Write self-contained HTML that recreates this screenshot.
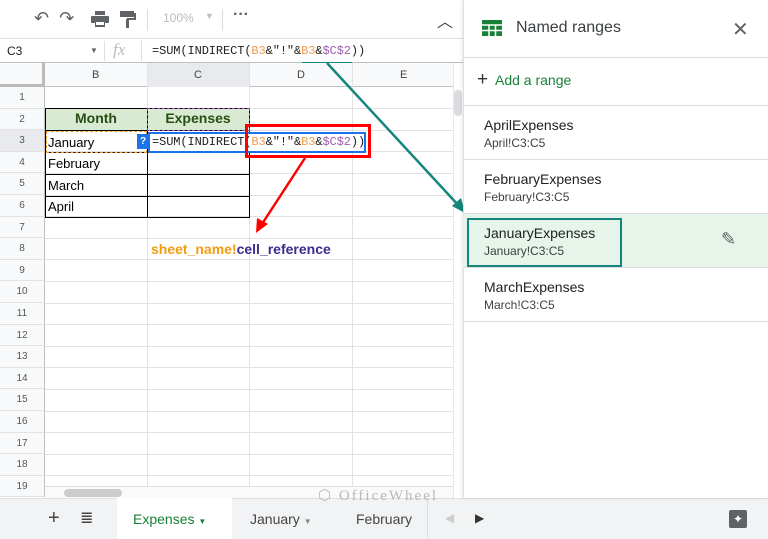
<!DOCTYPE html><html><head><style>
*{box-sizing:border-box;margin:0;padding:0}
body{width:768px;height:539px;overflow:hidden;background:#fff;font-family:"Liberation Sans",Arial,sans-serif;position:relative}
.a{position:absolute}
.rh{position:absolute;left:0;width:45px;height:21.6px;border-bottom:1px solid #e2e2e2;border-right:1px solid #c0c0c0;background:#f8f9fa;font-size:10px;color:#555;text-align:center;line-height:21px}
.hl{position:absolute;left:45px;width:408px;height:1px;background:#e2e2e2}
.vl{position:absolute;top:63px;width:1px;height:435px;background:#e2e2e2}
.cell{position:absolute;font-size:13px;color:#000;padding-left:3px;line-height:21px}
.item{position:absolute;left:463px;width:305px;height:54px;border-bottom:1px solid #dadce0}
.item b{position:absolute;left:21px;top:11px;font-weight:normal;font-size:14px;color:#202124}
.item i{position:absolute;left:21px;top:30px;font-style:normal;font-size:12px;color:#3c4043}
.mono{font-family:'Liberation Mono',monospace;font-size:12px;letter-spacing:-0.1px;color:#222}
</style></head><body>
<div class="a" style="left:0;top:0;width:463px;height:39px;border-bottom:1px solid #e0e0e0"></div>
<div class="a" style="left:34px;top:8px;font-size:18px;color:#5f6368;letter-spacing:10px">↶↷</div>
<svg class="a" style="left:91px;top:11px" width="18" height="16"><rect x="4" y="0" width="10" height="4" fill="#5f6368"/><rect x="0" y="5" width="18" height="7" rx="1" fill="#5f6368"/><rect x="4" y="10" width="10" height="6" fill="#5f6368"/><rect x="5" y="11" width="8" height="3" fill="#fff"/></svg>
<svg class="a" style="left:120px;top:11px" width="16" height="17"><rect x="0" y="0" width="14" height="6" fill="#5f6368"/><rect x="14" y="2" width="2" height="6" fill="#5f6368"/><rect x="7" y="7" width="9" height="2" fill="#5f6368"/><rect x="6" y="8" width="3" height="9" fill="#5f6368"/></svg>
<div class="a" style="left:147px;top:9px;width:1px;height:22px;background:#dadce0"></div>
<div class="a" style="left:163px;top:11px;font-size:12px;color:#bbb">100%</div>
<div class="a" style="left:205px;top:11px;font-size:9px;color:#bbb">▼</div>
<div class="a" style="left:222px;top:9px;width:1px;height:22px;background:#dadce0"></div>
<div class="a" style="left:233px;top:6px;font-size:16px;color:#5f6368;font-weight:bold">···</div>
<div class="a" style="left:437px;top:8px;font-size:16px;color:#444">︿</div>
<div class="a" style="left:0;top:39px;width:463px;height:24px;border-bottom:1px solid #c0c0c0"></div>
<div class="a" style="left:7px;top:44px;font-size:12px;color:#222">C3</div>
<div class="a" style="left:90px;top:46px;font-size:8px;color:#666">▼</div>
<div class="a" style="left:104px;top:41px;width:1px;height:20px;background:#e0e0e0"></div>
<div class="a" style="left:113px;top:40px;font-size:17px;color:#bbb;font-style:italic;font-family:'Liberation Serif',serif">fx</div>
<div class="a" style="left:141px;top:41px;width:1px;height:20px;background:#e0e0e0"></div>
<div class="a mono" style="left:152px;top:44px">=SUM(INDIRECT(<span style="color:#f29b4a">B3</span>&amp;"!"&amp;<span style="color:#f29b4a">B3</span>&amp;<span style="color:#9c5bb0">$C$2</span>))</div>
<div class="a" style="left:302px;top:62px;width:50px;height:2px;background:#15867d"></div>
<div class="a" style="left:0;top:63px;width:453px;height:24px;background:#f8f9fa;border-bottom:1px solid #c0c0c0"></div>
<div class="a" style="left:0;top:63px;width:45px;height:24px;border-right:3px solid #bbb;border-bottom:3px solid #bbb"></div>
<div class="a" style="left:147px;top:63px;width:102px;height:24px;background:#e8eaed"></div>
<div class="a" style="left:92px;top:69px;font-size:11px;color:#444">B</div>
<div class="a" style="left:194px;top:69px;font-size:11px;color:#444">C</div>
<div class="a" style="left:297px;top:69px;font-size:11px;color:#444">D</div>
<div class="a" style="left:400px;top:69px;font-size:11px;color:#444">E</div>
<div class="vl" style="left:147px"></div><div class="vl" style="left:249px"></div><div class="vl" style="left:352px"></div>
<div class="rh" style="top:87px">1</div><div class="rh" style="top:108.6px">2</div><div class="rh" style="top:130.2px;background:#e8eaed">3</div><div class="rh" style="top:151.8px">4</div><div class="rh" style="top:173.4px">5</div><div class="rh" style="top:195px">6</div><div class="rh" style="top:216.6px">7</div><div class="rh" style="top:238.2px">8</div><div class="rh" style="top:259.8px">9</div><div class="rh" style="top:281.4px">10</div><div class="rh" style="top:303px">11</div><div class="rh" style="top:324.6px">12</div><div class="rh" style="top:346.2px">13</div><div class="rh" style="top:367.8px">14</div><div class="rh" style="top:389.4px">15</div><div class="rh" style="top:411px">16</div><div class="rh" style="top:432.6px">17</div><div class="rh" style="top:454.2px">18</div><div class="rh" style="top:475.8px">19</div>
<div class="hl" style="top:108px"></div><div class="hl" style="top:130px"></div><div class="hl" style="top:151px"></div><div class="hl" style="top:173px"></div><div class="hl" style="top:195px"></div><div class="hl" style="top:216px"></div><div class="hl" style="top:238px"></div><div class="hl" style="top:259px"></div><div class="hl" style="top:281px"></div><div class="hl" style="top:303px"></div><div class="hl" style="top:324px"></div><div class="hl" style="top:346px"></div><div class="hl" style="top:367px"></div><div class="hl" style="top:389px"></div><div class="hl" style="top:411px"></div><div class="hl" style="top:432px"></div><div class="hl" style="top:454px"></div><div class="hl" style="top:475px"></div>
<div class="a" style="left:45px;top:108px;width:204px;height:22px;background:#d9ead3"></div>
<div class="a" style="left:45px;top:108px;width:205px;height:110px;border:1px solid #000"></div>
<div class="a" style="left:147px;top:108px;width:1px;height:110px;background:#000"></div>
<div class="a" style="left:45px;top:130px;width:205px;height:1px;background:#000"></div>
<div class="a" style="left:45px;top:174px;width:205px;height:1px;background:#000"></div>
<div class="a" style="left:45px;top:196px;width:205px;height:1px;background:#000"></div>
<div class="a" style="left:45px;top:152px;width:205px;height:1px;background:#000"></div>
<div class="a" style="left:147px;top:108px;width:103px;height:23px;border:1px dashed #8e44ad"></div>
<div class="a" style="left:46px;top:131px;width:101px;height:22px;border:1px dashed #f29b2a"></div>
<div class="a" style="left:45px;top:110px;width:102px;text-align:center;font-size:14px;font-weight:bold;color:#274e13">Month</div>
<div class="a" style="left:147px;top:110px;width:102px;text-align:center;font-size:14px;font-weight:bold;color:#274e13">Expenses</div>
<div class="cell" style="left:45px;top:132px">January</div>
<div class="cell" style="left:45px;top:153px">February</div>
<div class="cell" style="left:45px;top:175px">March</div>
<div class="cell" style="left:45px;top:196px">April</div>
<div class="a" style="left:137px;top:134px;width:12px;height:15px;background:#1a73e8;color:#fff;font-size:10px;font-weight:bold;text-align:center;line-height:15px">?</div>
<div class="a" style="left:148px;top:132px;width:218px;height:21px;border:2px solid #1a73e8;background:#fff"></div>
<div class="a mono" style="left:152px;top:135px">=SUM(INDIRECT(<span style="color:#f29b4a">B3</span>&amp;"!"&amp;<span style="color:#f29b4a">B3</span>&amp;<span style="color:#9c5bb0">$C$2</span>))</div>
<div class="a" style="left:245px;top:124px;width:126px;height:34px;border:3px solid #f00"></div>
<div class="a" style="left:151px;top:241px;font-size:14px;font-weight:bold"><span style="color:#f39c12">sheet_name!</span><span style="color:#3d2a8c">cell_reference</span></div>
<div class="a" style="left:453px;top:63px;width:10px;height:435px;background:#fff;border-left:1px solid #e8e8e8"></div>
<div class="a" style="left:454px;top:90px;width:8px;height:26px;background:#dadce0;border-radius:4px"></div>
<div class="a" style="left:45px;top:486px;width:408px;height:12px;background:#fafafa;border-top:1px solid #e0e0e0"></div>
<div class="a" style="left:64px;top:489px;width:58px;height:8px;background:#ccc;border-radius:4px"></div>
<svg class="a" style="left:0;top:0" width="768" height="539">
<line x1="327" y1="63" x2="460" y2="207" stroke="#15867d" stroke-width="2.5"/>
<polygon points="465,213 452,206 461,198" fill="#15867d"/>
<line x1="305" y1="158" x2="262" y2="224" stroke="#f00" stroke-width="2.5"/>
<polygon points="256,233 257,218 268,224" fill="#f00"/>
</svg>
<div class="a" style="left:0;top:498px;width:768px;height:41px;background:#f1f3f4;border-top:1px solid #e0e0e0"></div>
<div class="a" style="left:48px;top:507px;font-size:20px;color:#444">+</div>
<div class="a" style="left:80px;top:508px;font-size:16px;color:#444">≣</div>
<div class="a" style="left:117px;top:498px;width:115px;height:41px;background:#fff"></div>
<div class="a" style="left:133px;top:511px;font-size:14px;color:#188038">Expenses <span style="font-size:8px">▼</span></div>
<div class="a" style="left:250px;top:511px;font-size:14px;color:#444">January <span style="font-size:8px;color:#888">▼</span></div>
<div class="a" style="left:356px;top:511px;font-size:14px;color:#444">February</div>
<div class="a" style="left:427px;top:498px;width:1px;height:41px;background:#ddd"></div>
<div class="a" style="left:445px;top:511px;font-size:12px;color:#ccc">◀</div>
<div class="a" style="left:475px;top:511px;font-size:12px;color:#333">▶</div>
<div class="a" style="left:729px;top:510px;width:18px;height:18px;background:#5f6368;border-radius:2px;color:#fff;font-size:12px;text-align:center;line-height:18px">✦</div>
<div class="a" style="left:318px;top:486px;font-size:15px;color:#aaa;font-family:'Liberation Serif',serif;letter-spacing:2px;opacity:.8">⬡ OfficeWheel</div>
<div class="a" style="left:463px;top:0;width:305px;height:498px;background:#fff;border-left:1px solid #e0e0e0;box-shadow:-1px 0 3px rgba(0,0,0,.1)"></div>
<svg class="a" style="left:482px;top:20px" width="20" height="16"><rect x="0" y="0" width="20" height="16" fill="#188038"/><g stroke="#fff" stroke-width="1.5"><line x1="0" y1="5" x2="20" y2="5"/><line x1="0" y1="10.5" x2="20" y2="10.5"/><line x1="7" y1="5" x2="7" y2="16"/><line x1="13.5" y1="5" x2="13.5" y2="16"/></g></svg>
<div class="a" style="left:516px;top:19px;font-size:16px;color:#3c4043">Named ranges</div>
<div class="a" style="left:732px;top:17px;font-size:20px;color:#5f6368">✕</div>
<div class="a" style="left:463px;top:57px;width:305px;height:1px;background:#dadce0"></div>
<div class="a" style="left:477px;top:69px;font-size:19px;color:#333">+</div>
<div class="a" style="left:495px;top:72px;font-size:14px;color:#188038">Add a range</div>
<div class="a" style="left:463px;top:105px;width:305px;height:1px;background:#dadce0"></div>
<div class="item" style="top:106px"><b>AprilExpenses</b><i>April!C3:C5</i></div>
<div class="item" style="top:160px"><b>FebruaryExpenses</b><i>February!C3:C5</i></div>
<div class="item" style="top:214px;background:#e6f4ea"><b>JanuaryExpenses</b><i>January!C3:C5</i></div>
<div class="item" style="top:268px"><b>MarchExpenses</b><i>March!C3:C5</i></div>
<div class="a" style="left:467px;top:218px;width:155px;height:49px;border:2.5px solid #15867d"></div>
<div class="a" style="left:721px;top:229px;font-size:18px;color:#5f6368">✎</div>
</body></html>
